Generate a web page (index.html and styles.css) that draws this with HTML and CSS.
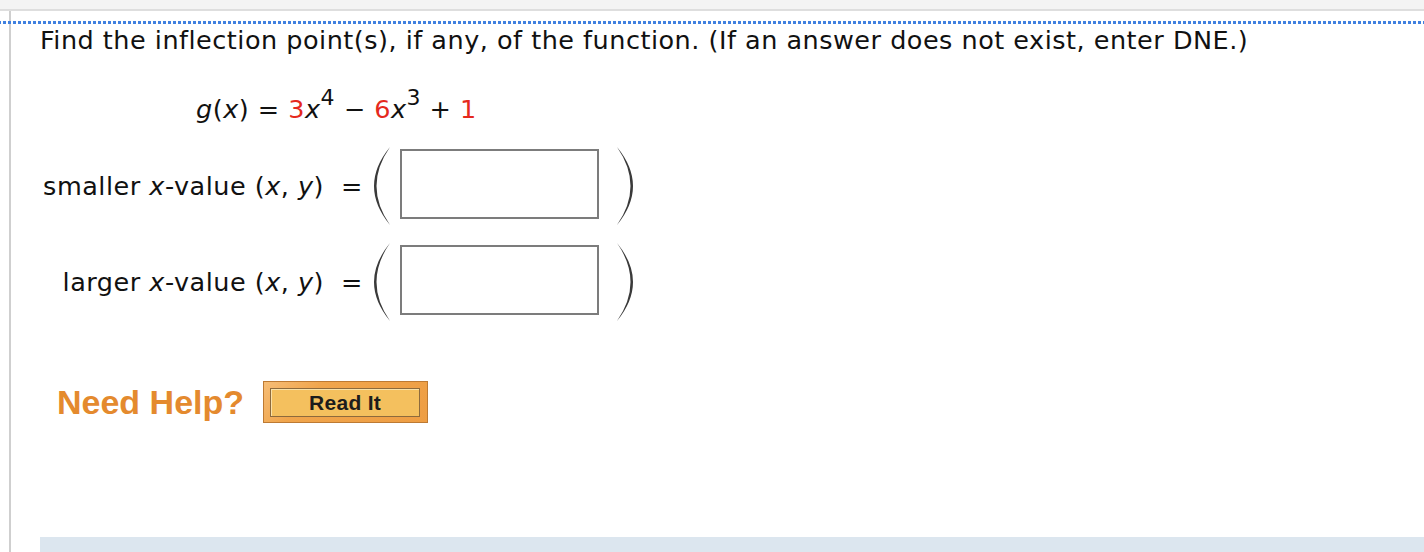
FILE: index.html
```html
<!DOCTYPE html>
<html lang="en">
<head>
<meta charset="utf-8">
<title>Inflection points</title>
<link rel="stylesheet" href="styles.css">
</head>
<body>
<div class="topstrip"></div>
<div class="dots"></div>
<div class="main">
  <div class="content">
    <p class="question">Find the inflection point(s), if any, of the function. (If an answer does not exist, enter DNE.)</p>
    <p class="equation"><i>g</i>(<i>x</i>) = <span class="red">3</span><i>x</i><sup class="sup">4</sup> − <span class="red">6</span><i>x</i><sup class="sup">3</sup> + <span class="red">1</span></p>
    <div class="answers">
      <div class="row">
        <div class="label">smaller <i>x</i>-value (<i>x</i>, <i>y</i>)</div>
        <div class="eq">=</div>
        <svg class="paren paren-l" width="18" height="78" viewBox="0 0 18 78"><path d="M17 0 Q -15 39 17 78 Q -10 39 17 0 Z"/></svg>
        <input class="box" type="text" aria-label="smaller x-value">
        <svg class="paren paren-r" width="18" height="78" viewBox="0 0 18 78"><path d="M1 0 Q 33 39 1 78 Q 28 39 1 0 Z"/></svg>
      </div>
      <div class="row">
        <div class="label">larger <i>x</i>-value (<i>x</i>, <i>y</i>)</div>
        <div class="eq">=</div>
        <svg class="paren paren-l" width="18" height="78" viewBox="0 0 18 78"><path d="M17 0 Q -15 39 17 78 Q -10 39 17 0 Z"/></svg>
        <input class="box" type="text" aria-label="larger x-value">
        <svg class="paren paren-r" width="18" height="78" viewBox="0 0 18 78"><path d="M1 0 Q 33 39 1 78 Q 28 39 1 0 Z"/></svg>
      </div>
    </div>
    <div class="help">
      <span class="need">Need Help?</span>
      <span class="btn"><span class="btn-inner">Read It</span></span>
    </div>
  </div>
  <div class="band"></div>
</div>
</body>
</html>
```

FILE: styles.css
```css
html, body {
  margin: 0;
  padding: 0;
}
body {
  position: relative;
  height: 552px;
  overflow: hidden;
  background: #fff;
  color: #111;
  font-family: "DejaVu Sans", Verdana, sans-serif;
}
.topstrip {
  height: 9px;
  background: #f4f4f4;
  border-bottom: 2px solid #dedede;
}
.dots {
  position: absolute;
  top: 21px;
  left: 0;
  right: 0;
  height: 3px;
  background-image: linear-gradient(to right, #3f80df 3px, transparent 3px);
  background-size: 5px 3px;
  background-position: 3px 0;
  background-repeat: repeat-x;
}
.main {
  margin-left: 9px;
  border-left: 2px solid #cfcfcf;
  height: 541px;
  display: flex;
  flex-direction: column;
}
.content {
  flex: 1;
  padding-left: 29px;
}
.question {
  margin: 0;
  padding-top: 14px;
  font-size: 25.5px;
  line-height: 30px;
  letter-spacing: 0.5px;
  white-space: nowrap;
}
.equation {
  margin: 39px 0 0 0;
  padding-left: 156px;
  height: 30px;
  font-size: 25.5px;
  line-height: 30px;
  letter-spacing: 0.5px;
  white-space: nowrap;
}
.red {
  color: #e5291d;
}
.sup {
  font-size: 22px;
  line-height: 0;
  vertical-align: 13px;
}
.answers {
  margin-top: 23px;
  display: flex;
  flex-direction: column;
  gap: 18px;
}
.row {
  display: flex;
  align-items: flex-start;
  height: 78px;
}
.label {
  width: 284px;
  text-align: right;
  margin-top: 24px;
  font-size: 25.5px;
  line-height: 30px;
  letter-spacing: 0.5px;
  white-space: nowrap;
}
.eq {
  width: 21px;
  margin-left: 17px;
  margin-top: 24px;
  font-size: 25.5px;
  line-height: 30px;
}
.paren {
  display: block;
  fill: #3a3a3a;
}
.paren-l {
  margin-left: 11px;
}
.paren-r {
  margin-left: 17px;
}
.box {
  display: block;
  box-sizing: border-box;
  width: 199px;
  height: 70px;
  margin: 2px 0 0 9px;
  padding: 0;
  border: 2px solid #7c7c7c;
  background: #fff;
  outline: none;
}
.help {
  margin-top: 60px;
  display: flex;
  align-items: center;
}
.need {
  margin-left: 17px;
  font-family: "Liberation Sans", Arial, sans-serif;
  font-weight: bold;
  font-size: 34px;
  color: #e48a2e;
}
.btn {
  margin-left: 19px;
  box-sizing: border-box;
  width: 165px;
  height: 42px;
  padding: 6px 7px 5px 6px;
  border: 1px solid #bd7a33;
  background: linear-gradient(135deg, #f6bd76 0%, #f0a54c 30%, #ee9e44 100%);
  display: flex;
}
.btn-inner {
  flex: 1;
  border: 1px solid #8d6a3c;
  box-shadow: inset 1px 1px 0 #fbe1a6;
  background: #f4c05e;
  display: flex;
  align-items: center;
  justify-content: center;
  font-family: "Liberation Sans", Arial, sans-serif;
  font-weight: bold;
  font-size: 21px;
  letter-spacing: 0.3px;
  color: #1c1c1c;
}
.band {
  height: 15px;
  margin-left: 29px;
  background: #dce6ef;
}
```
